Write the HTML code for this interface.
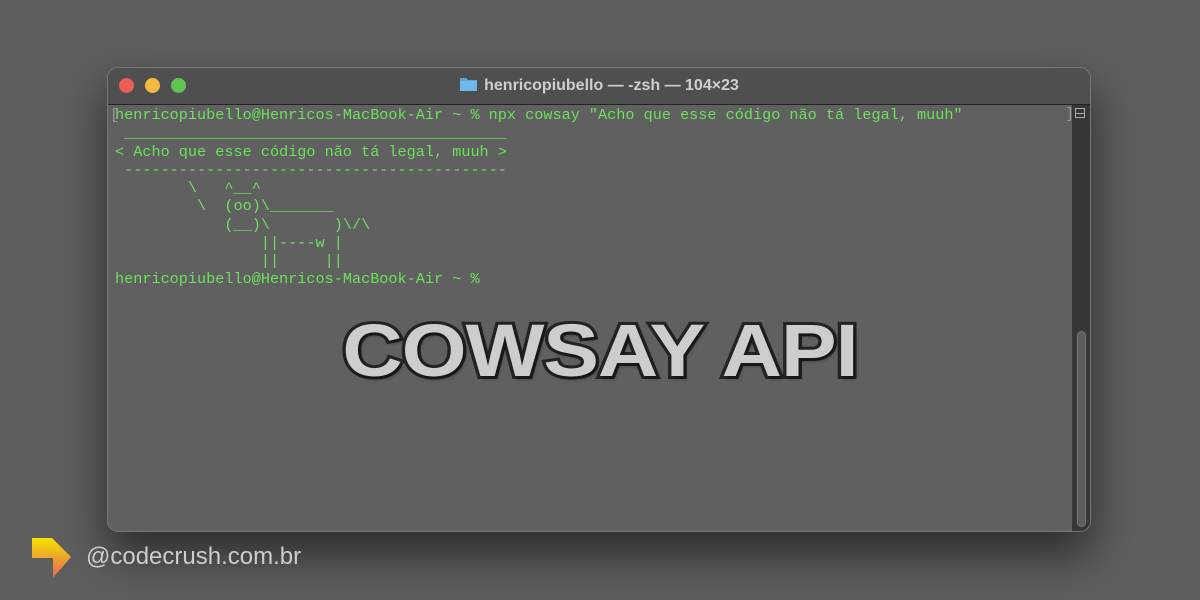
<!DOCTYPE html>
<html><head><meta charset="utf-8"><style>
body{margin:0;width:1200px;height:600px;background:#5e5e5e;position:relative;overflow:hidden;font-family:"Liberation Sans",sans-serif}
.win{position:absolute;left:107px;top:67px;width:984px;height:465px;background:#606060;border-radius:11px;border:1px solid #777;box-sizing:border-box;box-shadow:0 22px 45px rgba(0,0,0,.55);overflow:hidden}
.tb{position:absolute;left:0;top:0;right:0;height:36px;background:#4f4f4f;border-bottom:1px solid #222}
.dot{position:absolute;top:10px;width:15px;height:15px;border-radius:50%}
.title{position:absolute;left:0;right:0;top:8px;text-align:center;color:#cfcfcf;font-weight:bold;font-size:16px}
.term{position:absolute;left:7px;top:38px;margin:0;font-family:"Liberation Mono",monospace;font-size:15.2px;line-height:18.25px;color:#6be25a;white-space:pre}
.sb{position:absolute;right:0;top:37px;width:18px;bottom:0;background:#363636}
.thumb{position:absolute;right:4px;width:9px;top:226px;bottom:4px;border-radius:5px;background:#5c5c5c;border:1px solid #777;box-sizing:border-box}
.big{position:absolute;left:0;right:0;top:308px;text-align:center;font-size:74px;font-weight:900;color:#cdcdcd;-webkit-text-stroke:6px #232323;paint-order:stroke fill;letter-spacing:-1px;transform:scaleX(1.13);text-shadow:2px 3px 3px rgba(0,0,0,.4)}
.cc{position:absolute;left:86px;top:543px;color:#cdcdcd;font-size:24px}
</style></head><body>
<div class="win">
<div class="tb">
<div class="dot" style="left:11px;background:#ec5e55"></div>
<div class="dot" style="left:37px;background:#f2bb41"></div>
<div class="dot" style="left:63px;background:#5fc453"></div>
<div class="title"><svg width="19" height="16" viewBox="0 0 19 16" style="vertical-align:-2px;margin-right:6px"><path d="M1 2h6l2 2h9v11H1z" fill="#5aa6e0"/><rect x="1" y="5" width="17" height="10" fill="#6fb8ee"/></svg>henricopiubello — -zsh — 104×23</div>
</div>
<div style="position:absolute;left:2px;top:38px;color:#999;font-family:'Liberation Mono',monospace;font-size:15.2px;line-height:18.25px">[</div>
<pre class="term">henricopiubello@Henricos-MacBook-Air ~ % npx cowsay "Acho que esse código não tá legal, muuh"
 __________________________________________
&lt; Acho que esse código não tá legal, muuh &gt;
 ------------------------------------------
        \   ^__^
         \  (oo)\_______
            (__)\       )\/\
                ||----w |
                ||     ||
henricopiubello@Henricos-MacBook-Air ~ %</pre>
<div style="position:absolute;left:957px;top:38px;color:#999;font-family:'Liberation Mono',monospace;font-size:15px">]</div>
<div class="sb"><div style="position:absolute;left:3px;top:3px;width:10px;height:10px;border:1px solid #aaa;box-sizing:border-box;background:linear-gradient(#aaa,#aaa) center/100% 1px no-repeat"></div><div class="thumb"></div></div>
</div>
<div class="big">COWSAY API</div>
<svg style="position:absolute;left:30px;top:536px" width="45" height="45" viewBox="30 536 45 45"><defs><linearGradient id="g" x1="0" y1="0" x2="0" y2="1"><stop offset="0" stop-color="#f6e400"/><stop offset="1" stop-color="#e4625c"/></linearGradient></defs><path d="M32 538H52L71 557L53 578V558H32Z" fill="url(#g)"/></svg>
<div class="cc">@codecrush.com.br</div>
</body></html>
